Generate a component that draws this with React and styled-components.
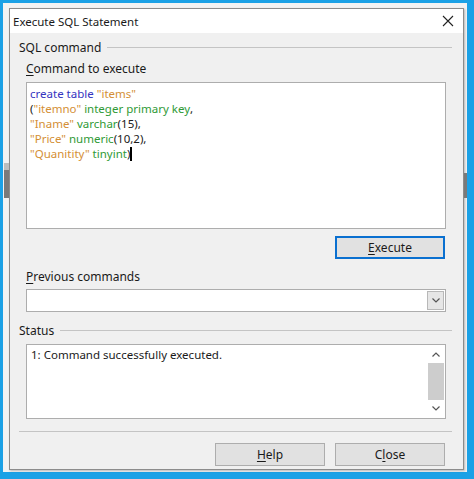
import React from "react";
import styled, { createGlobalStyle } from "styled-components";

const GlobalStyle = createGlobalStyle`
  html, body {
    margin: 0;
    padding: 0;
    background: #1ba1e6;
  }
  * {
    box-sizing: border-box;
  }
`;

const colors = {
  face: "#f0f0f0",
  border: "#adadad",
  line: "#c4c4c4",
  text: "#1a1a1a",
  keyword: "#3434c0",
  string: "#d48f35",
  ident: "#2f9a35",
};

const Screen = styled.div`
  width: 474px;
  height: 479px;
  padding: 3px 7px 7px 3px;
  background: #1ba1e6;
  font-family: "Noto Sans", "Open Sans", sans-serif;
  font-size: 11.5px;
  color: ${colors.text};
`;

const Backdrop = styled.div`
  position: relative;
  height: 100%;
  background: #f3f3f3;
  padding: 5px 3px 0 6px;
`;

const ParentScroll = styled.div`
  position: absolute;
  left: 1px;
  top: 160px;
  width: 5px;
  height: 35px;
  background: linear-gradient(#bdbdbd 0 7px, #7a7a7a 7px);
`;

const ParentScrollRight = styled(ParentScroll)`
  left: auto;
  right: 0;
  top: 170px;
  height: 25px;
  width: 3px;
  background: #7a7a7a;
`;

const Dialog = styled.div`
  height: 462px;
  border: 1px solid #8c8c8c;
  background: ${colors.face};
  display: flex;
  flex-direction: column;
  box-shadow: 1px 1px 2px rgba(0, 0, 0, 0.25);
`;

const TitleBar = styled.div`
  height: 24px;
  background: #ffffff;
  display: flex;
  align-items: center;
  justify-content: space-between;
  padding: 0 9px 0 3px;
  font-size: 11.5px;
`;

const Body = styled.div`
  flex: 1;
  padding: 6px 11px 0 9px;
  display: flex;
  flex-direction: column;
`;

const GroupHeader = styled.div`
  display: flex;
  align-items: center;
  gap: 6px;
  height: 16px;
  font-size: 12px;
  margin-top: ${(p) => p.$top || 0}px;
  &::after {
    content: "";
    flex: 1;
    height: 1px;
    background: ${colors.line};
    margin-top: 1px;
  }
`;

const Indented = styled.div`
  padding-left: 7px;
  padding-right: 6px;
  display: flex;
  flex-direction: column;
`;

const FieldLabel = styled.div`
  height: 14px;
  line-height: 14px;
  font-size: 12px;
  margin-top: ${(p) => p.$top || 0}px;
  u {
    text-decoration: underline;
    text-underline-offset: 2px;
  }
`;

const CodeBox = styled.div`
  margin-top: 6px;
  height: 147px;
  background: #ffffff;
  border: 1px solid ${colors.border};
  padding: 3px 3px;
  font-size: 11.5px;
  line-height: 15px;
`;

const CodeLine = styled.div`
  white-space: pre;
  display: flex;
  align-items: center;
  height: 15px;
`;

const Tok = styled.span`
  color: ${(p) => colors[p.$kind] || colors.text};
`;

const Caret = styled.span`
  display: inline-block;
  width: 2px;
  height: 14px;
  background: #000;
`;

const ButtonRow = styled.div`
  display: flex;
  justify-content: flex-end;
  gap: 10px;
  margin-top: ${(p) => p.$top || 0}px;
  padding-right: ${(p) => p.$right || 0}px;
`;

const Button = styled.button`
  width: 110px;
  height: 23px;
  font-family: inherit;
  font-size: 12px;
  color: ${colors.text};
  background: #e1e1e1;
  border: ${(p) => (p.$focused ? "2px solid #0a70d0" : `1px solid ${colors.border}`)};
  padding: 0;
  u {
    text-underline-offset: 2px;
  }
`;

const Combo = styled.div`
  margin-top: 5px;
  height: 23px;
  background: #ffffff;
  border: 1px solid ${colors.border};
  display: flex;
  justify-content: flex-end;
  padding: 1px;
`;

const ComboArrow = styled.div`
  width: 17px;
  background: #e6e6e6;
  border: 1px solid #b8b8b8;
  display: flex;
  align-items: center;
  justify-content: center;
`;

const StatusBox = styled.div`
  margin-top: 6px;
  height: 75px;
  background: #ffffff;
  border: 1px solid ${colors.border};
  display: flex;
`;

const StatusText = styled.div`
  flex: 1;
  padding: 2px 4px;
  line-height: 16px;
  font-size: 11.5px;
`;

const ScrollBar = styled.div`
  width: 16px;
  margin: 1px 1px 1px 0;
  display: flex;
  flex-direction: column;
  align-items: center;
`;

const ScrollArrow = styled.div`
  height: 17px;
  width: 100%;
  display: flex;
  align-items: center;
  justify-content: center;
`;

const ScrollThumb = styled.div`
  width: 100%;
  height: 38px;
  background: #cdcdcd;
`;

const Separator = styled.div`
  height: 1px;
  background: ${colors.line};
  margin-top: 12px;
`;

const Chevron = ({ up }) => (
  <svg width="8" height="5" viewBox="0 0 8 5">
    <path
      d={up ? "M0.5 4.5 L4 1 L7.5 4.5" : "M0.5 0.5 L4 4 L7.5 0.5"}
      fill="none"
      stroke="#555"
      strokeWidth="1.2"
    />
  </svg>
);

const CloseIcon = () => (
  <svg width="12" height="12" viewBox="0 0 12 12">
    <path d="M1 1 L11 11 M11 1 L1 11" stroke="#222" strokeWidth="1.1" />
  </svg>
);

const code = [
  [["keyword", "create table "], ["string", "\"items\""]],
  [["text", "("], ["string", "\"itemno\""], ["ident", " integer primary key"], ["text", ","]],
  [["string", "\"Iname\""], ["ident", " varchar"], ["text", "(15),"]],
  [["string", "\"Price\""], ["ident", " numeric"], ["text", "(10,2),"]],
  [["string", "\"Quanitity\""], ["ident", " tinyint"], ["text", ")"]],
];

const App = () => {
  return (
    <Screen>
      <GlobalStyle />
      <Backdrop>
        <ParentScroll />
        <ParentScrollRight />
        <Dialog>
          <TitleBar>
            <span>Execute SQL Statement</span>
            <CloseIcon />
          </TitleBar>
          <Body>
            <GroupHeader>SQL command</GroupHeader>
            <Indented>
              <FieldLabel $top={7}>
                <u>C</u>ommand to execute
              </FieldLabel>
              <CodeBox>
                {code.map((line, i) => (
                  <CodeLine key={i}>
                    {line.map(([kind, txt], j) => (
                      <Tok key={j} $kind={kind}>
                        {txt}
                      </Tok>
                    ))}
                    {i === code.length - 1 && <Caret />}
                  </CodeLine>
                ))}
              </CodeBox>
              <ButtonRow $top={7} $right={1}>
                <Button $focused>
                  <u>E</u>xecute
                </Button>
              </ButtonRow>
              <FieldLabel $top={11}>
                <u>P</u>revious commands
              </FieldLabel>
              <Combo>
                <ComboArrow>
                  <Chevron />
                </ComboArrow>
              </Combo>
            </Indented>
            <GroupHeader $top={10}>Status</GroupHeader>
            <Indented>
              <StatusBox>
                <StatusText>1: Command successfully executed.</StatusText>
                <ScrollBar>
                  <ScrollArrow>
                    <Chevron up />
                  </ScrollArrow>
                  <ScrollThumb />
                  <ScrollArrow>
                    <Chevron />
                  </ScrollArrow>
                </ScrollBar>
              </StatusBox>
            </Indented>
            <Separator />
            <ButtonRow $top={11} $right={7}>
              <Button>
                <u>H</u>elp
              </Button>
              <Button>
                C<u>l</u>ose
              </Button>
            </ButtonRow>
          </Body>
        </Dialog>
      </Backdrop>
    </Screen>
  );
};

export default App;
